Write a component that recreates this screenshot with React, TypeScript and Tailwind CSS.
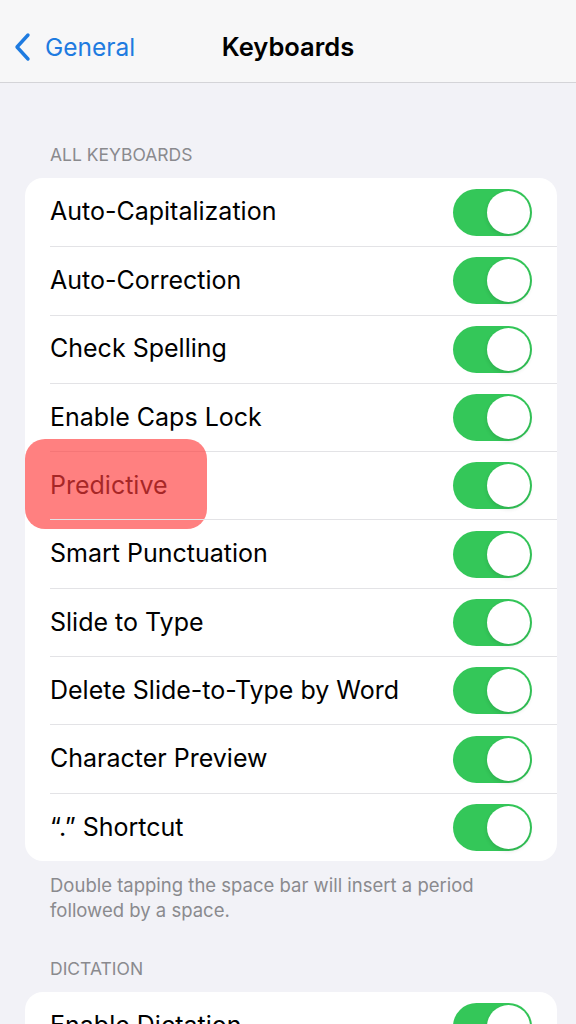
const rows = [
  "Auto-Capitalization",
  "Auto-Correction",
  "Check Spelling",
  "Enable Caps Lock",
  "Predictive",
  "Smart Punctuation",
  "Slide to Type",
  "Delete Slide-to-Type by Word",
  "Character Preview",
  "\u201C.\u201D Shortcut",
];

const Toggle = () => (
  <div className="flex h-[47px] w-[79px] items-center justify-end rounded-full bg-[#34c759] p-[2px]">
    <div className="h-[43px] w-[43px] rounded-full bg-white shadow-[0_2px_4px_rgba(0,0,0,0.12)]" />
  </div>
);

const Row = ({ label, first, highlight }: { label: string; first?: boolean; highlight?: boolean }) => (
  <div className="relative flex h-[68.3px] items-center pl-[25px]">
    <div
      className={`flex h-full flex-1 items-center justify-between pr-[25px] ${
        first ? "" : "border-t border-[#e3e3e6]"
      }`}
    >
      <span className="text-[25px] text-black">{label}</span>
      <Toggle />
    </div>
    {highlight && (
      <div className="absolute left-0 top-[-12px] h-[90px] w-[182px] rounded-[20px] bg-[#ff3c3c]/65" />
    )}
  </div>
);

export default function App() {
  return (
    <div
      className="h-[1024px] w-[576px] overflow-hidden bg-[#f2f2f7]"
      style={{ fontFamily: "Inter, 'Noto Sans', sans-serif" }}
    >
      <div className="relative flex h-[83px] items-center justify-center border-b border-[#d4d4d8] bg-[#f7f7f8] pt-[12px]">
        <div className="absolute left-[13px] top-0 flex h-full items-center gap-[14px] pt-[12px] text-[#1e7be0]">
          <svg width="18" height="30" viewBox="0 0 18 30" fill="none">
            <path d="M15 3 L4 15 L15 27" stroke="currentColor" strokeWidth="3.4" strokeLinecap="round" strokeLinejoin="round" />
          </svg>
          <span className="text-[24.5px]">General</span>
        </div>
        <span className="text-[25.5px] font-semibold text-black">Keyboards</span>
      </div>

      <div className="ml-[25px] mr-[19px]">
        <div className="px-[25px] pt-[60px] pb-[11px] text-[17.5px] leading-[24px] text-[#8a8a8e]">ALL KEYBOARDS</div>
        <div className="overflow-hidden rounded-[18px] bg-white">
          {rows.map((r, i) => (
            <Row key={r} label={r} first={i === 0} highlight={r === "Predictive"} />
          ))}
        </div>
        <p className="px-[25px] pt-[12px] text-[18.5px] leading-[25px] text-[#8a8a8e]">
          Double tapping the space bar will insert a period followed by a space.
        </p>
        <div className="px-[25px] pt-[34px] pb-[11px] text-[17.5px] leading-[24px] text-[#8a8a8e]">DICTATION</div>
        <div className="overflow-hidden rounded-[18px] bg-white">
          <Row label="Enable Dictation" first />
        </div>
      </div>
    </div>
  );
}
